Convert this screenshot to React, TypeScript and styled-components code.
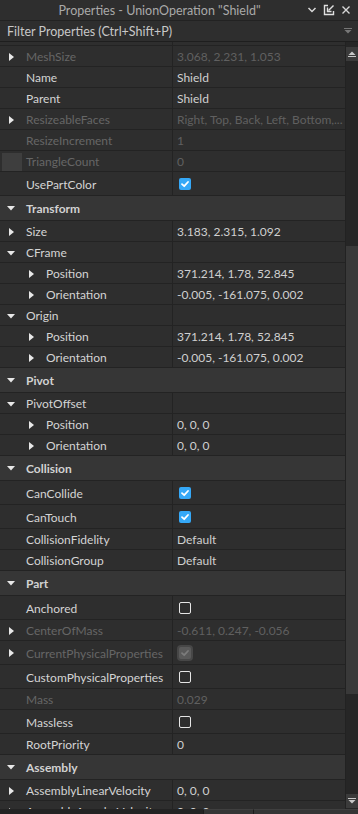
import React from "react";
import styled, { createGlobalStyle } from "styled-components";

const Global = createGlobalStyle`
  html, body { margin: 0; padding: 0; background: #2e2e2e; }
  body { font-family: Lato, "Noto Sans", sans-serif; }
  * { box-sizing: border-box; }
`;

const UI_FONT = `Lato, "Noto Sans", sans-serif`;

const Panel = styled.div`
  width: 358px;
  height: 814px;
  display: flex;
  flex-direction: column;
  overflow: hidden;
  background: #2e2e2e;
  font-family: ${UI_FONT};
`;

const TitleBar = styled.div`
  height: 21px;
  flex: none;
  display: flex;
  align-items: center;
  background: #2e2e2e;
  border-bottom: 1px solid #222;
  padding: 0 7px 0 0;
`;

const Title = styled.div`
  flex: 1;
  text-align: center;
  padding-left: 12px;
  color: #a9a9a9;
  font-size: 12.5px;
  white-space: nowrap;
`;

const TitleIcons = styled.div`
  display: flex;
  align-items: center;
  gap: 6px;
`;

const FilterBar = styled.div`
  height: 21px;
  flex: none;
  display: flex;
  align-items: center;
  justify-content: space-between;
  padding: 0 6px 0 7px;
  background: #2e2e2e;
  border-bottom: 1px solid #1e1e1e;
  color: #c8c8c8;
  font-size: 12.5px;
`;

const Body = styled.div`
  flex: 1;
  display: flex;
  min-height: 0;
`;

const List = styled.div`
  flex: 1;
  display: flex;
  flex-direction: column;
  overflow: hidden;
  border-right: 1px solid #222;
`;

const Row = styled.div<{ $h: number }>`
  flex: none;
  height: ${(p) => p.$h}px;
  display: grid;
  grid-template-columns: 173px 1fr;
  border-bottom: 1px solid #232323;
  background: #2e2e2e;
`;

const NameCell = styled.div<{ $indent: number }>`
  display: flex;
  align-items: center;
  padding-left: ${(p) => 2 + p.$indent * 20}px;
  padding-top: 1px;
  border-right: 1px solid #232323;
  overflow: hidden;
  white-space: nowrap;
`;

const Slot = styled.span<{ $marker?: boolean }>`
  flex: none;
  width: 24px;
  height: 18px;
  display: flex;
  align-items: center;
  background: ${(p) => (p.$marker ? "linear-gradient(to right, #3e3e3e 20px, transparent 20px)" : "transparent")};
`;

const Label = styled.span<{ $disabled?: boolean }>`
  font-size: 12px;
  color: ${(p) => (p.$disabled ? "#666" : "#d4d4d4")};
`;

const ValueCell = styled.div<{ $disabled?: boolean }>`
  display: flex;
  align-items: center;
  padding-left: 4px;
  padding-top: 1px;
  font-size: 12px;
  color: ${(p) => (p.$disabled ? "#606060" : "#d0d0d0")};
  white-space: nowrap;
  overflow: hidden;
`;

const SectionRow = styled.div`
  flex: none;
  height: 25px;
  display: flex;
  align-items: center;
  padding-left: 2px;
  background: #363636;
  border-bottom: 1px solid #232323;
`;

const SectionLabel = styled.span`
  font-size: 12px;
  font-weight: 700;
  color: #d2d2d2;
`;

const CheckBox = styled.span<{ $state: "on" | "off" | "disabled" }>`
  width: 12px;
  height: 12px;
  margin-left: 2px;
  border-radius: 2px;
  display: flex;
  align-items: center;
  justify-content: center;
  background: ${(p) => (p.$state === "on" ? "#35a8f7" : p.$state === "disabled" ? "#5a5a5a" : "transparent")};
  border: ${(p) => (p.$state === "off" ? "1.5px solid #e6e6e6" : "none")};
  box-shadow: ${(p) => (p.$state === "disabled" ? "0 0 0 2px #474747" : "none")};
`;

const ScrollBar = styled.div`
  width: 12px;
  flex: none;
  display: flex;
  flex-direction: column;
  background: #262626;
  padding: 5px 0 1px;
`;

const ScrollButton = styled.div`
  height: 14px;
  flex: none;
  display: flex;
  align-items: center;
  justify-content: center;
  background: #3b3b3b;
`;

const Track = styled.div`
  flex: 1;
  display: flex;
  flex-direction: column;
`;

const Thumb = styled.div<{ $offset: number; $size: number }>`
  margin-top: ${(p) => p.$offset}px;
  height: ${(p) => p.$size}px;
  background: #393939;
`;

const BottomStrip = styled.div`
  height: 5px;
  flex: none;
  display: grid;
  grid-template-columns: 203px 50px 1fr;
  background: #232323;
`;

const Tab = styled.div`
  background: #353535;
  border-left: 1px solid #1c1c1c;
  border-top: 1px solid #3f3f3f;
`;

type Arrow = "right" | "down" | undefined;

type Item =
  | { kind: "spacer" }
  | { kind: "section"; label: string }
  | {
      kind: "prop";
      label: string;
      value?: string;
      arrow?: Arrow;
      indent?: number;
      disabled?: boolean;
      check?: "on" | "off" | "disabled";
      marker?: boolean;
    };

const items: Item[] = [
  { kind: "spacer" },
  { kind: "prop", label: "MeshSize", value: "3.068, 2.231, 1.053", arrow: "right", disabled: true },
  { kind: "prop", label: "Name", value: "Shield" },
  { kind: "prop", label: "Parent", value: "Shield" },
  { kind: "prop", label: "ResizeableFaces", value: "Right, Top, Back, Left, Bottom,...", arrow: "right", disabled: true },
  { kind: "prop", label: "ResizeIncrement", value: "1", disabled: true },
  { kind: "prop", label: "TriangleCount", value: "0", disabled: true, marker: true },
  { kind: "prop", label: "UsePartColor", check: "on" },
  { kind: "section", label: "Transform" },
  { kind: "prop", label: "Size", value: "3.183, 2.315, 1.092", arrow: "right" },
  { kind: "prop", label: "CFrame", arrow: "down" },
  { kind: "prop", label: "Position", value: "371.214, 1.78, 52.845", arrow: "right", indent: 1 },
  { kind: "prop", label: "Orientation", value: "-0.005, -161.075, 0.002", arrow: "right", indent: 1 },
  { kind: "prop", label: "Origin", arrow: "down" },
  { kind: "prop", label: "Position", value: "371.214, 1.78, 52.845", arrow: "right", indent: 1 },
  { kind: "prop", label: "Orientation", value: "-0.005, -161.075, 0.002", arrow: "right", indent: 1 },
  { kind: "section", label: "Pivot" },
  { kind: "prop", label: "PivotOffset", arrow: "down" },
  { kind: "prop", label: "Position", value: "0, 0, 0", arrow: "right", indent: 1 },
  { kind: "prop", label: "Orientation", value: "0, 0, 0", arrow: "right", indent: 1 },
  { kind: "section", label: "Collision" },
  { kind: "prop", label: "CanCollide", check: "on" },
  { kind: "prop", label: "CanTouch", check: "on" },
  { kind: "prop", label: "CollisionFidelity", value: "Default" },
  { kind: "prop", label: "CollisionGroup", value: "Default" },
  { kind: "section", label: "Part" },
  { kind: "prop", label: "Anchored", check: "off" },
  { kind: "prop", label: "CenterOfMass", value: "-0.611, 0.247, -0.056", arrow: "right", disabled: true },
  { kind: "prop", label: "CurrentPhysicalProperties", check: "disabled", arrow: "right", disabled: true },
  { kind: "prop", label: "CustomPhysicalProperties", check: "off" },
  { kind: "prop", label: "Mass", value: "0.029", disabled: true },
  { kind: "prop", label: "Massless", check: "off" },
  { kind: "prop", label: "RootPriority", value: "0" },
  { kind: "section", label: "Assembly" },
  { kind: "prop", label: "AssemblyLinearVelocity", value: "0, 0, 0", arrow: "right" },
  { kind: "prop", label: "AssemblyAngularVelocity", value: "0, 0, 0", arrow: "right" },
];

const ArrowIcon = ({ dir }: { dir: Arrow }) => {
  if (!dir) return null;
  return (
    <svg width="24" height="10" viewBox="0 0 24 10">
      {dir === "right" ? (
        <polygon points="7,1 12,5 7,9" fill="#e8e8e8" />
      ) : (
        <polygon points="5,3 13,3 9,7.5" fill="#e8e8e8" />
      )}
    </svg>
  );
};

const CheckMark = ({ color }: { color: string }) => (
  <svg width="10" height="10" viewBox="0 0 10 10">
    <polyline points="2,5.2 4.2,7.2 8,3" fill="none" stroke={color} strokeWidth="1.8" strokeLinecap="round" strokeLinejoin="round" />
  </svg>
);

const PropRow = ({ it }: { it: Extract<Item, { kind: "prop" }> }) => {
  const h = it.check ? 24 : 21;
  return (
    <Row $h={h}>
      <NameCell $indent={it.indent ?? 0}>
        <Slot $marker={it.marker}>
          <ArrowIcon dir={it.arrow} />
        </Slot>
        <Label $disabled={it.disabled}>{it.label}</Label>
      </NameCell>
      <ValueCell $disabled={it.disabled}>
        {it.check ? (
          <CheckBox $state={it.check}>
            {it.check === "on" && <CheckMark color="#ffffff" />}
            {it.check === "disabled" && <CheckMark color="#7c7c7c" />}
          </CheckBox>
        ) : (
          it.value
        )}
      </ValueCell>
    </Row>
  );
};

export default function App() {
  return (
    <>
      <Global />
      <Panel>
        <TitleBar>
          <Title>Properties - UnionOperation "Shield"</Title>
          <TitleIcons>
            <svg width="10" height="10" viewBox="0 0 10 10">
              <polyline points="1.5,3 5,6.5 8.5,3" fill="none" stroke="#d8d8d8" strokeWidth="1.5" />
            </svg>
            <svg width="12" height="12" viewBox="0 0 12 12">
              <polyline points="5,1.5 1.5,1.5 1.5,10.5 10.5,10.5 10.5,7" fill="none" stroke="#e0e0e0" strokeWidth="1.4" />
              <line x1="10.5" y1="1.5" x2="5.5" y2="6.5" stroke="#e0e0e0" strokeWidth="1.4" />
              <polyline points="4.5,3.5 4.5,7.5 8.5,7.5" fill="none" stroke="#e0e0e0" strokeWidth="1.4" />
            </svg>
            <svg width="10" height="10" viewBox="0 0 10 10">
              <path d="M1.5 1.5 L8.5 8.5 M8.5 1.5 L1.5 8.5" stroke="#d8d8d8" strokeWidth="1.4" />
            </svg>
          </TitleIcons>
        </TitleBar>
        <FilterBar>
          <span>Filter Properties (Ctrl+Shift+P)</span>
          <svg width="8" height="6" viewBox="0 0 8 6">
            <rect x="0" y="0" width="8" height="1" fill="#777" />
            <polygon points="0.5,2 7.5,2 4,5.5" fill="#777" />
          </svg>
        </FilterBar>
        <Body>
          <List>
            {items.map((it, i) => {
              if (it.kind === "spacer")
                return (
                  <Row key={i} $h={4}>
                    <NameCell $indent={0} />
                    <ValueCell />
                  </Row>
                );
              if (it.kind === "section")
                return (
                  <SectionRow key={i}>
                    <Slot>
                      <ArrowIcon dir="down" />
                    </Slot>
                    <SectionLabel>{it.label}</SectionLabel>
                  </SectionRow>
                );
              return <PropRow key={i} it={it} />;
            })}
          </List>
          <ScrollBar>
            <ScrollButton>
              <svg width="8" height="6" viewBox="0 0 8 6">
                <polygon points="0.5,4 7.5,4 4,0.5" fill="#c8c8c8" />
                <rect x="0" y="5" width="8" height="1" fill="#c8c8c8" />
              </svg>
            </ScrollButton>
            <Track>
              <Thumb $offset={185} $size={448} />
            </Track>
            <ScrollButton>
              <svg width="8" height="6" viewBox="0 0 8 6">
                <rect x="0" y="0" width="8" height="1" fill="#c8c8c8" />
                <polygon points="0.5,2 7.5,2 4,5.5" fill="#c8c8c8" />
              </svg>
            </ScrollButton>
          </ScrollBar>
        </Body>
        <BottomStrip>
          <div />
          <Tab />
          <Tab />
        </BottomStrip>
      </Panel>
    </>
  );
}
